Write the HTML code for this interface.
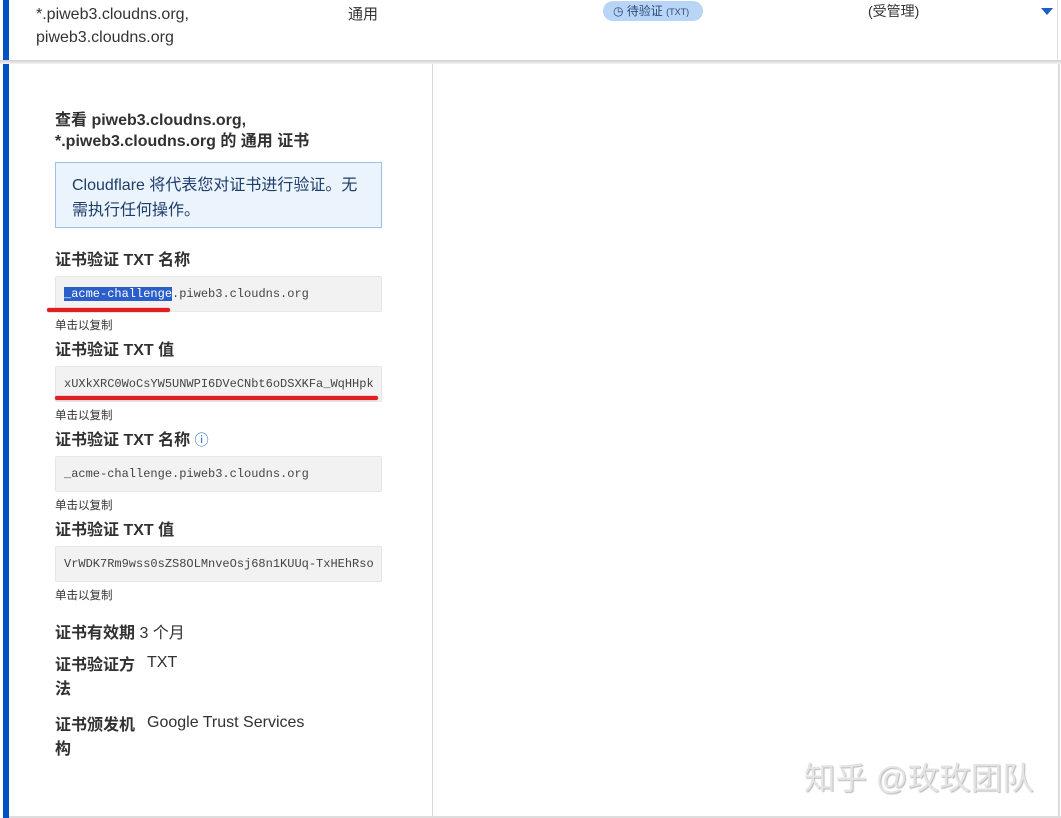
<!DOCTYPE html>
<html><head><meta charset="utf-8"><style>
*{margin:0;padding:0;box-sizing:border-box}
body{width:1061px;height:818px;background:#fff;position:relative;overflow:hidden;font-family:"Liberation Sans","Noto Sans CJK SC",sans-serif;color:#313131}
.a{position:absolute;white-space:nowrap}
.h{font-weight:bold;font-size:16px;color:#313131}
.box{position:absolute;left:55px;width:327px;height:36px;background:#f2f2f2;border:1px solid #e6e6e6;border-radius:2px;font-family:"Liberation Mono",monospace;font-size:12px;color:#444;padding-left:8px;line-height:34px;white-space:nowrap;overflow:hidden}
.cp{position:absolute;left:55px;font-size:11.5px;color:#333}
.red{position:absolute;height:4px;background:#e02020;border-radius:2px;box-shadow:0 0 1px #e02020}
</style></head><body>
<div class="a" style="left:0;top:0;width:1058px;height:61px;background:#fff;border-right:1px solid #ddd"></div>
<div class="a" style="left:0;top:60px;width:1061px;height:4px;background:linear-gradient(#d0d0d0,#f2f2f2)"></div>
<div class="a" style="left:3px;top:0;width:6px;height:60px;background:#0051c3"></div>
<div class="a" style="left:3px;top:64px;width:6px;height:754px;background:#0051c3"></div>
<div class="a" style="left:432px;top:64px;width:1px;height:754px;background:#d8d8d8"></div>
<div class="a" style="left:1058px;top:64px;width:2px;height:754px;background:#ddd"></div>
<div class="a" style="left:9px;top:816px;width:1052px;height:2px;background:#ddd"></div>

<div class="a" style="left:36px;top:3px;font-size:16px;line-height:23px;color:#333">*.piweb3.cloudns.org,<br>piweb3.cloudns.org</div>
<div class="a" style="left:348px;top:3px;font-size:15px;color:#333">通用</div>
<div class="a" style="left:603px;top:1px;width:100px;height:20px;border-radius:10px;background:#b9d5f5;font-size:12px;line-height:20px;color:#2a4a78;padding-left:10px">◷ 待验证 <span style="font-size:9px">(TXT)</span></div>
<div class="a" style="left:868px;top:1px;font-size:14px;color:#333">(受管理)</div>
<div class="a" style="left:1041px;top:8px;width:0;height:0;border-left:6px solid transparent;border-right:6px solid transparent;border-top:7px solid #1a5fc6"></div>

<div class="a h" style="left:55px;top:110px;line-height:21px">查看 piweb3.cloudns.org,<br>*.piweb3.cloudns.org 的 通用 证书</div>
<div class="a" style="left:55px;top:162px;width:327px;height:66px;background:#ebf3fc;border:1px solid #9fc0e6;font-size:16px;line-height:25px;color:#1d3d6a;padding:10px 20px 0 16px;white-space:normal">Cloudflare 将代表您对证书进行验证。无需执行任何操作。</div>

<div class="a h" style="left:55px;top:246px">证书验证 TXT 名称</div>
<div class="box" style="top:276px"><span style="background:#2a5fc9;color:#fff">_acme-challenge</span>.piweb3.cloudns.org</div>
<div class="red" style="left:47px;top:308px;width:123px"></div>
<div class="cp" style="top:317px">单击以复制</div>
<div class="a h" style="left:55px;top:336px">证书验证 TXT 值</div>
<div class="box" style="top:366px">xUXkXRC0WoCsYW5UNWPI6DVeCNbt6oDSXKFa_WqHHpk</div>
<div class="red" style="left:55px;top:396px;width:323px"></div>
<div class="cp" style="top:407px">单击以复制</div>
<div class="a h" style="left:55px;top:426px">证书验证 TXT 名称 <span style="color:#1a5fc6;font-weight:normal;font-size:14px">ⓘ</span></div>
<div class="box" style="top:456px">_acme-challenge.piweb3.cloudns.org</div>
<div class="cp" style="top:497px">单击以复制</div>
<div class="a h" style="left:55px;top:516px">证书验证 TXT 值</div>
<div class="box" style="top:546px">VrWDK7Rm9wss0sZS8OLMnveOsj68n1KUUq-TxHEhRso</div>
<div class="cp" style="top:587px">单击以复制</div>

<div class="a" style="left:55px;top:619px;font-size:16px"><b>证书有效期</b> 3 个月</div>
<div class="a h" style="left:55px;top:654px;line-height:24px">证书验证方<br>法</div>
<div class="a" style="left:147px;top:654px;font-size:16px">TXT</div>
<div class="a h" style="left:55px;top:714px;line-height:24px">证书颁发机<br>构</div>
<div class="a" style="left:147px;top:714px;font-size:16px">Google Trust Services</div>

<div class="a" style="left:804px;top:753px;font-size:31.5px;color:#e4e4e4;text-shadow:1px 1px 1px #bbb">知乎 @玫玫团队</div>
</body></html>
